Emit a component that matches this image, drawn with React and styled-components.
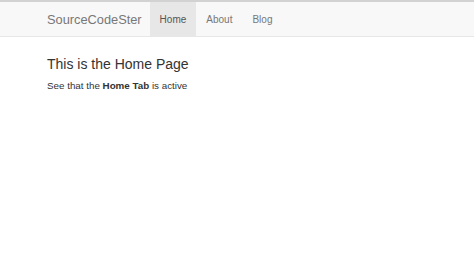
import React from "react";
import styled, { createGlobalStyle } from "styled-components";

const Global = createGlobalStyle`
  html, body { margin: 0; padding: 0; background: #fff; }
  body { font-family: "Liberation Sans", Arial, sans-serif; color: #333; }
`;

const Page = styled.div`
  border-top: 2px solid #d2d2d2;
`;

const Navbar = styled.nav`
  background: #f8f8f8;
  border-bottom: 1px solid #e7e7e7;
  height: 34px;
  display: flex;
  align-items: stretch;
  padding-left: 47px;
`;

const Brand = styled.a`
  font-size: 12.8px;
  color: #777;
  display: flex;
  align-items: center;
  padding-right: 8px;
  text-decoration: none;
`;

const NavList = styled.ul`
  list-style: none;
  margin: 0;
  padding: 0;
  display: flex;
`;

const NavItem = styled.li`
  display: flex;
`;

const NavLink = styled.a`
  display: flex;
  align-items: center;
  padding: 0 10px;
  font-size: 10px;
  color: ${p => (p.$active ? "#555" : "#777")};
  background: ${p => (p.$active ? "#e7e7e7" : "transparent")};
  text-decoration: none;
  cursor: pointer;
`;

const Container = styled.main`
  padding: 19px 47px 0;
`;

const Title = styled.h3`
  margin: 0 0 8px;
  font-size: 14px;
  font-weight: normal;
  color: #333;
`;

const Text = styled.p`
  margin: 0;
  font-size: 9.8px;
  color: #333;
`;

export default function App() {
  return (
    <Page>
      <Global />
      <Navbar>
        <Brand>SourceCodeSter</Brand>
        <NavList>
          <NavItem><NavLink $active>Home</NavLink></NavItem>
          <NavItem><NavLink>About</NavLink></NavItem>
          <NavItem><NavLink>Blog</NavLink></NavItem>
        </NavList>
      </Navbar>
      <Container>
        <Title>This is the Home Page</Title>
        <Text>See that the <b>Home Tab</b> is active</Text>
      </Container>
    </Page>
  );
}
